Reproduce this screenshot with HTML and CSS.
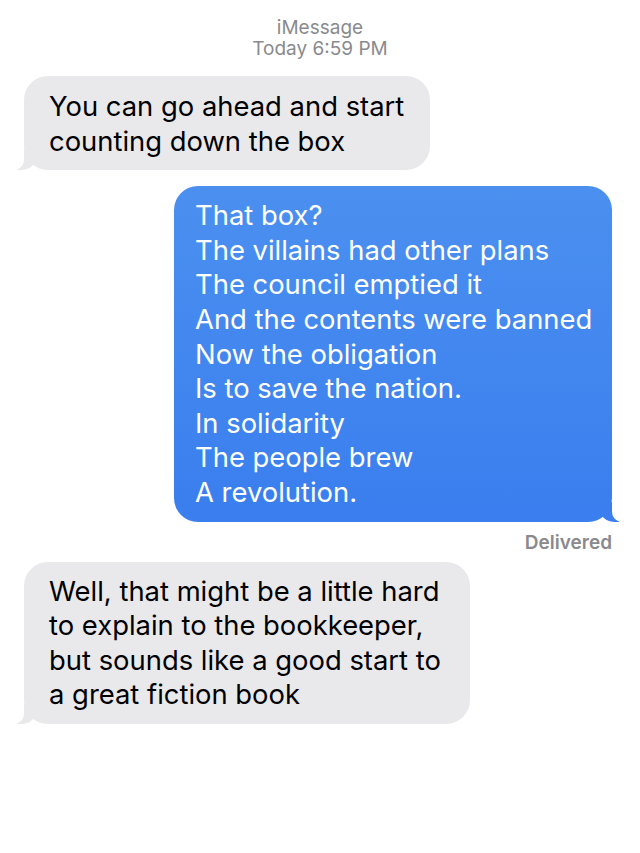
FILE: index.html
```html
<!DOCTYPE html>
<html>
<head>
<meta charset="utf-8">
<link rel="stylesheet" href="styles.css">
</head>
<body>
<div class="chat">
  <div class="header">
    <div>iMessage</div>
    <div>Today 6:59 PM</div>
  </div>
  <div class="row in">
    <div class="bubble gray b1">You can go ahead and start<br>counting down the box</div>
  </div>
  <div class="row out">
    <div class="bubble blue">That box?<br>The villains had other plans<br>The council emptied it<br>And the contents were banned<br>Now the obligation<br>Is to save the nation.<br>In solidarity<br>The people brew<br>A revolution.</div>
  </div>
  <div class="status">Delivered</div>
  <div class="row in">
    <div class="bubble gray b3">Well, that might be a little hard<br>to explain to the bookkeeper,<br>but sounds like a good start to<br>a great fiction book</div>
  </div>
</div>
</body>
</html>
```
FILE: styles.css
```css
html, body {
  margin: 0;
  padding: 0;
  background: #ffffff;
}
.chat {
  width: 640px;
  height: 853px;
  font-family: Inter, "Liberation Sans", sans-serif;
  display: flex;
  flex-direction: column;
  padding-top: 17px;
  box-sizing: border-box;
}
.header {
  text-align: center;
  color: #8a8a8e;
  font-size: 19px;
  line-height: 21px;
  margin-bottom: 17px;
}
.row {
  display: flex;
  padding: 0 28px 0 24px;
}
.row.out {
  justify-content: flex-end;
  margin-top: 16px;
}
.bubble {
  position: relative;
  font-size: 27.4px;
  line-height: 34.6px;
  white-space: nowrap;
  border-radius: 24px;
  padding: 12px 22px 12px 25px;
}
.gray {
  background: #e9e9eb;
  color: #000;
}
.b1 { width: 359px; padding-top: 13px; padding-bottom: 12px; }
.b3 { width: 399px; padding-top: 12px; padding-bottom: 12px; }
.blue {
  background: linear-gradient(#4b90ef, #3a7eef);
  color: #fff;
  padding: 12px 20px 12px 21px;
  width: 397px;
}
.gray::before {
  content: "";
  position: absolute;
  bottom: 0;
  left: -7px;
  width: 20px;
  height: 20px;
  background: #e9e9eb;
  border-bottom-right-radius: 15px;
}
.gray::after {
  content: "";
  position: absolute;
  bottom: 0;
  left: -10px;
  width: 10px;
  height: 20px;
  background: #fff;
  border-bottom-right-radius: 10px;
}
.blue::before {
  content: "";
  position: absolute;
  bottom: 0;
  right: -7px;
  width: 20px;
  height: 20px;
  background: #3a7eef;
  border-bottom-left-radius: 15px;
}
.blue::after {
  content: "";
  position: absolute;
  bottom: 0;
  right: -10px;
  width: 10px;
  height: 20px;
  background: #fff;
  border-bottom-left-radius: 10px;
}
.status {
  text-align: right;
  padding-right: 28px;
  font-size: 19px;
  font-weight: 600;
  color: #8a8a8e;
  margin-top: 10px;
  margin-bottom: 8px;
  line-height: 22px;
}
```
